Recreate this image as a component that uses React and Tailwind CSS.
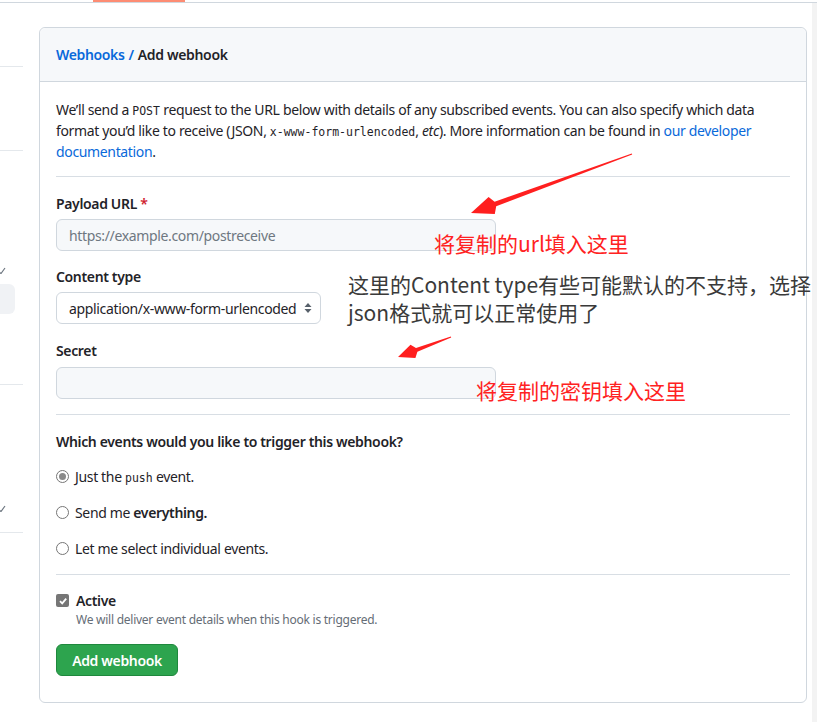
import React from "react";

const UI_FONT = { fontFamily: '"Noto Sans", "Liberation Sans", sans-serif' };
const MONO_FONT = { fontFamily: '"DejaVu Sans Mono", "Liberation Mono", monospace' };
const CJK_FONT = { fontFamily: '"Noto Sans CJK SC", sans-serif' };

// polygon for a hand-drawn style arrow, tail -> tip
function arrowPoints(tail, tip, headLen, headW, shaftW) {
    const dx = tip[0] - tail[0];
    const dy = tip[1] - tail[1];
    const len = Math.hypot(dx, dy);
    const ux = dx / len, uy = dy / len;
    const nx = -uy, ny = ux;
    const bx = tip[0] - ux * headLen, by = tip[1] - uy * headLen;
    const pts = [
        [tail[0] + nx * 0.6, tail[1] + ny * 0.6],
        [bx + nx * shaftW, by + ny * shaftW],
        [bx + ux * 4 + nx * headW, by + uy * 4 + ny * headW],
        tip,
        [bx + ux * 4 - nx * headW, by + uy * 4 - ny * headW],
        [bx - nx * shaftW, by - ny * shaftW],
        [tail[0] - nx * 0.6, tail[1] - ny * 0.6],
    ];
    return pts.map((p) => p[0].toFixed(1) + "," + p[1].toFixed(1)).join(" ");
}

function Code({ children }) {
    return <span className="text-[11.5px] leading-none tracking-normal" style={MONO_FONT}>{children}</span>;
}

function Radio({ checked }) {
    return (
        <span className="w-[13px] h-[13px] rounded-full border border-[#767676] bg-white flex items-center justify-center shrink-0">
            {checked && <span className="w-[7px] h-[7px] rounded-full bg-[#8a8a8a]" />}
        </span>
    );
}

function Chevron({ className }) {
    return (
        <svg className={className} width="6" height="8" viewBox="0 0 6 8">
            <path d="M-2 5 L1 7.5 L5 2" fill="none" stroke="#6e7781" strokeWidth="1.2" />
        </svg>
    );
}

function Sidebar() {
    return (
        <div className="w-[23px] shrink-0 flex flex-col">
            <div className="h-[63px]" />
            <div className="h-px bg-[#e4e8ec]" />
            <div className="h-[83px]" />
            <div className="h-px bg-[#e4e8ec]" />
            <div className="h-[119px] relative">
                <Chevron className="absolute left-0 bottom-[-4px]" />
            </div>
            <div className="h-[14px]" />
            <div className="h-[30px] w-[15px] rounded-r-md bg-[#f0f2f5]" />
            <div className="h-[70px]" />
            <div className="h-px bg-[#e4e8ec]" />
            <div className="h-[119px] relative">
                <Chevron className="absolute left-0 bottom-[-8px]" />
            </div>
            <div className="h-[28px]" />
            <div className="h-px bg-[#e4e8ec]" />
        </div>
    );
}

function WebhookForm() {
    return (
        <div className="w-[768px] h-[676px] mt-[24px] ml-[16px] border border-[#d0d7de] rounded-md flex flex-col text-[#1f2328] text-[14px] tracking-[-0.35px]" style={UI_FONT}>
            <div className="h-[54px] shrink-0 bg-[#f6f8fa] border-b border-[#d0d7de] rounded-t-md flex items-center px-[16px] font-semibold">
                <span className="text-[#0969da]">Webhooks</span>
                <span className="text-[#0969da] mx-[4px]">/</span>
                <span>Add webhook</span>
            </div>
            <div className="px-[16px] flex flex-col">
                <p className="mt-[17px] leading-[21px]">
                    We’ll send a <Code>POST</Code> request to the URL below with details of any subscribed events. You can also specify which data
                    format you’d like to receive (JSON, <Code>x-www-form-urlencoded</Code>, <em>etc</em>). More information can be found in{" "}
                    <span className="text-[#0969da]">our developer documentation</span>.
                </p>
                <div className="h-px bg-[#d8dee4] mt-[14px]" />

                <label className="mt-[16px] leading-[21px] font-semibold">
                    Payload URL <span className="text-[#cf222e]">*</span>
                </label>
                <div className="mt-[5px] w-[440px] h-[32px] rounded-md border border-[#d0d7de] bg-[#f6f8fa] flex items-center px-[12px] text-[#6e7781]">
                    https://example.com/postreceive
                </div>

                <label className="mt-[15px] leading-[21px] font-semibold">Content type</label>
                <div className="mt-[5px] w-[265px] h-[32px] rounded-md border border-[#d0d7de] bg-white flex items-center justify-between pl-[12px] pr-[8px]">
                    <span className="whitespace-nowrap">application/x-www-form-urlencoded</span>
                    <svg width="8" height="12" viewBox="0 0 8 12" className="shrink-0">
                        <path d="M4 1 L7.5 5 H0.5 Z" fill="#57606a" />
                        <path d="M4 11 L7.5 7 H0.5 Z" fill="#57606a" />
                    </svg>
                </div>

                <label className="mt-[16px] leading-[21px] font-semibold">Secret</label>
                <div className="mt-[6px] w-[440px] h-[32px] rounded-md border border-[#d0d7de] bg-[#f6f8fa]" />

                <div className="h-px bg-[#d8dee4] mt-[15px]" />

                <div className="mt-[16px] leading-[21px] font-semibold">Which events would you like to trigger this webhook?</div>
                <div className="mt-[14px] flex flex-col gap-[15px]">
                    <div className="flex items-center gap-[6px] h-[21px]">
                        <Radio checked />
                        <span>Just the <Code>push</Code> event.</span>
                    </div>
                    <div className="flex items-center gap-[6px] h-[21px]">
                        <Radio />
                        <span>Send me <span className="font-semibold">everything.</span></span>
                    </div>
                    <div className="flex items-center gap-[6px] h-[21px]">
                        <Radio />
                        <span>Let me select individual events.</span>
                    </div>
                </div>

                <div className="h-px bg-[#d8dee4] mt-[15px]" />

                <div className="mt-[15px] flex items-center gap-[7px] h-[21px]">
                    <span className="w-[13px] h-[13px] rounded-[2px] bg-[#767676] flex items-center justify-center">
                        <svg width="10" height="10" viewBox="0 0 10 10">
                            <path d="M2 5.2 L4.2 7.4 L8.2 2.6" fill="none" stroke="white" strokeWidth="1.8" />
                        </svg>
                    </span>
                    <span className="font-semibold">Active</span>
                </div>
                <div className="pl-[20px] text-[12px] leading-[18px] tracking-[-0.25px] text-[#656d76]">
                    We will deliver event details when this hook is triggered.
                </div>

                <button className="mt-[15px] self-start w-[122px] h-[32px] rounded-md bg-[#2da44e] border border-[#1f883d] text-white font-semibold">
                    Add webhook
                </button>
            </div>
        </div>
    );
}

function Annotations() {
    return (
        <>
            <svg className="absolute inset-0 pointer-events-none" width="817" height="722">
                <polygon points={arrowPoints([632, 154], [471, 213], 26, 9, 2.4)} fill="#ff1f1f" />
                <polygon points={arrowPoints([451, 337], [398, 357], 20, 7, 2)} fill="#ff1f1f" />
            </svg>
            <div className="absolute left-[434px] top-[229px] text-[21px] leading-[28px] text-[#ff2222] whitespace-nowrap" style={CJK_FONT}>
                将复制的url填入这里
            </div>
            <div className="absolute left-[348px] top-[270px] text-[21px] leading-[28px] text-[#3a3a3a] whitespace-nowrap" style={CJK_FONT}>
                这里的Content type有些可能默认的不支持，选择
                <br />
                json格式就可以正常使用了
            </div>
            <div className="absolute left-[476px] top-[376px] text-[21px] leading-[28px] text-[#ff2222] whitespace-nowrap" style={CJK_FONT}>
                将复制的密钥填入这里
            </div>
        </>
    );
}

function App() {
    return (
        <div className="w-[817px] h-[722px] relative overflow-hidden bg-white">
            <div className="h-[3px] border-b border-[#d0d7de] relative">
                <div className="absolute left-[93px] top-0 w-[92px] h-[2px] bg-[#fd8c73]" />
            </div>
            <div className="flex">
                <Sidebar />
                <WebhookForm />
                <div className="ml-auto w-[5px] h-[719px] bg-[#f3f3f3]" />
            </div>
            <Annotations />
        </div>
    );
}

export default App;
